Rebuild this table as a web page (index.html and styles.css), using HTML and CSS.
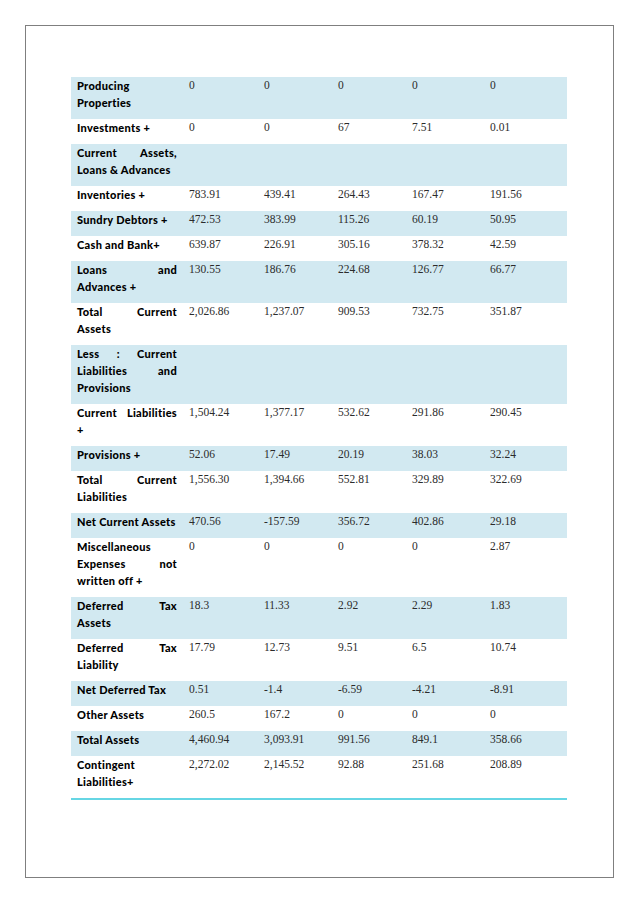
FILE: index.html
```html
<!DOCTYPE html>
<html>
<head>
<meta charset="utf-8">
<link rel="stylesheet" href="styles.css">
</head>
<body>
<div class="page">
  <table class="fin">
    <colgroup>
      <col class="c-label"><col class="c2"><col class="c3"><col class="c4"><col class="c5"><col class="c6">
    </colgroup>
    <tbody>
      <tr class="alt"><th>Producing Properties</th><td>0</td><td>0</td><td>0</td><td>0</td><td>0</td></tr>
      <tr><th>Investments +</th><td>0</td><td>0</td><td>67</td><td>7.51</td><td>0.01</td></tr>
      <tr class="alt"><th>Current Assets, Loans &amp; Advances</th><td></td><td></td><td></td><td></td><td></td></tr>
      <tr><th>Inventories +</th><td>783.91</td><td>439.41</td><td>264.43</td><td>167.47</td><td>191.56</td></tr>
      <tr class="alt"><th>Sundry Debtors +</th><td>472.53</td><td>383.99</td><td>115.26</td><td>60.19</td><td>50.95</td></tr>
      <tr><th>Cash and Bank+</th><td>639.87</td><td>226.91</td><td>305.16</td><td>378.32</td><td>42.59</td></tr>
      <tr class="alt"><th>Loans and Advances +</th><td>130.55</td><td>186.76</td><td>224.68</td><td>126.77</td><td>66.77</td></tr>
      <tr><th>Total Current Assets</th><td>2,026.86</td><td>1,237.07</td><td>909.53</td><td>732.75</td><td>351.87</td></tr>
      <tr class="alt"><th>Less : Current Liabilities and Provisions</th><td></td><td></td><td></td><td></td><td></td></tr>
      <tr><th>Current Liabilities +</th><td>1,504.24</td><td>1,377.17</td><td>532.62</td><td>291.86</td><td>290.45</td></tr>
      <tr class="alt"><th>Provisions +</th><td>52.06</td><td>17.49</td><td>20.19</td><td>38.03</td><td>32.24</td></tr>
      <tr><th>Total Current Liabilities</th><td>1,556.30</td><td>1,394.66</td><td>552.81</td><td>329.89</td><td>322.69</td></tr>
      <tr class="alt"><th>Net Current Assets</th><td>470.56</td><td>-157.59</td><td>356.72</td><td>402.86</td><td>29.18</td></tr>
      <tr><th>Miscellaneous Expenses not written off +</th><td>0</td><td>0</td><td>0</td><td>0</td><td>2.87</td></tr>
      <tr class="alt"><th>Deferred Tax Assets</th><td>18.3</td><td>11.33</td><td>2.92</td><td>2.29</td><td>1.83</td></tr>
      <tr><th>Deferred Tax Liability</th><td>17.79</td><td>12.73</td><td>9.51</td><td>6.5</td><td>10.74</td></tr>
      <tr class="alt"><th>Net Deferred Tax</th><td>0.51</td><td>-1.4</td><td>-6.59</td><td>-4.21</td><td>-8.91</td></tr>
      <tr><th>Other Assets</th><td>260.5</td><td>167.2</td><td>0</td><td>0</td><td>0</td></tr>
      <tr class="alt"><th>Total Assets</th><td>4,460.94</td><td>3,093.91</td><td>991.56</td><td>849.1</td><td>358.66</td></tr>
      <tr class="last"><th>Contingent Liabilities+</th><td>2,272.02</td><td>2,145.52</td><td>92.88</td><td>251.68</td><td>208.89</td></tr>
    </tbody>
  </table>
</div>
</body>
</html>
```

FILE: styles.css
```css
html, body {
  margin: 0;
  padding: 0;
  background: #ffffff;
}

.page {
  box-sizing: border-box;
  margin: 25px 0 0 25px;
  width: 589px;
  height: 853px;
  border: 1px solid #7f7f7f;
  padding: 51px 0 0 45px;
}

.fin {
  border-collapse: collapse;
  table-layout: fixed;
  width: 496px;
}

.c-label { width: 112px; }
.c2 { width: 75px; }
.c3 { width: 74px; }
.c4 { width: 74px; }
.c5 { width: 78px; }
.c6 { width: 83px; }

.fin th,
.fin td {
  vertical-align: top;
  padding: 0 6px 8px 6px;
  line-height: 17px;
}

.fin th {
  font-family: "Lato", "DejaVu Sans", sans-serif;
  font-weight: 900;
  font-size: 11px;
  letter-spacing: 0.3px;
  color: #000000;
  text-align: justify;
}

.fin td {
  font-family: "Liberation Serif", "Times New Roman", serif;
  font-size: 11.5px;
  color: #2b2b2b;
  text-align: left;
}

.fin tr.alt th,
.fin tr.alt td {
  background: #d2e9f1;
}

.fin tr.last th,
.fin tr.last td {
  border-bottom: 2px solid #66d6e4;
}
```
